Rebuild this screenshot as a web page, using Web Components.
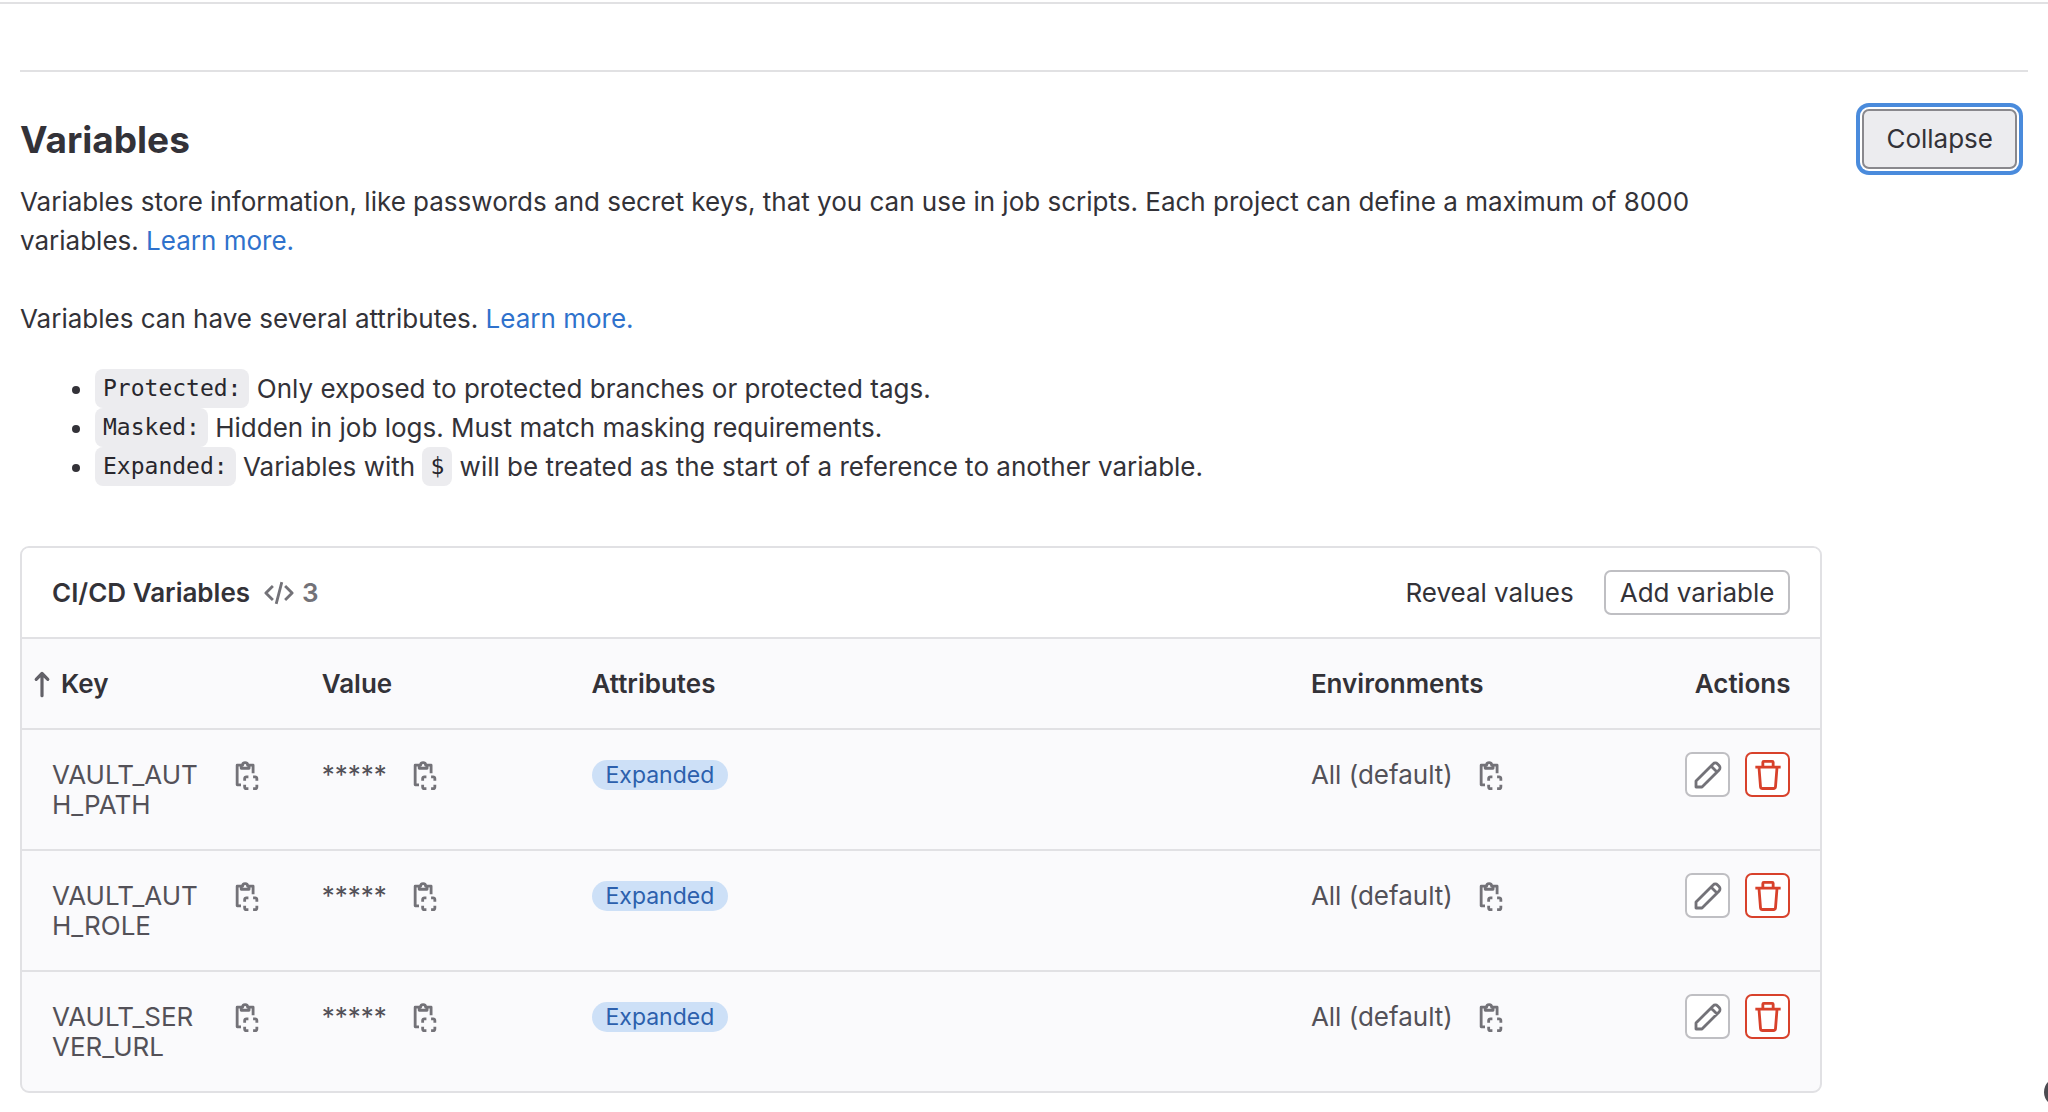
<!DOCTYPE html>
<html lang="en">
<head>
<meta charset="utf-8">
<title>CI/CD Settings</title>
<style>
    body {
        margin: 0;
        background: #fff;
        color: #333238;
        font-family: Inter, "Liberation Sans", sans-serif;
        font-size: 26px;
        line-height: 39px;
    }
</style>
</head>
<body>
<settings-page>
    <settings-section heading="Variables">
        <variables-intro></variables-intro>
        <variables-card heading="CI/CD Variables"></variables-card>
    </settings-section>
</settings-page>
<help-bubble></help-bubble>

<script>
const ICONS = {
    code: '<path d="M4.750 4.250 1 8l3.750 3.750M11.250 4.250 15 8l-3.750 3.750M9.500 2.250 6.500 13.750"/>',
    arrow: '<path d="M8 14.250V2.500M4.900 5.500 8 2.400 11.100 5.500" stroke-width="1.700" stroke-linecap="round"/>',
    copy: '<path d="M5.250 2.750H2.750V13.250H4.800M8.750 2.750h2.500V7M4.900 2.750V4.400h4.200V2.750H8.350a1.350 1.350 0 1 0-2.700 0z"/><path d="M6.750 11.100V9.900a.9.900 0 0 1 .9-.9h1.100M11.250 9h1.100a.9.900 0 0 1 .9.900v1.200M13.250 13.150v1.200a.9.900 0 0 1-.9.900h-1.100M8.750 15.250h-1.100a.9.900 0 0 1-.9-.9v-1.200"/>',
    pencil: '<path d="M1.600 14.400V11.200L10.700 2.100a1.700 1.700 0 0 1 2.400 0l.8.800a1.700 1.700 0 0 1 0 2.400L4.800 14.400zM9.600 3.200l3.200 3.200"/>',
    trash: '<path d="M1.250 3.750h13.500M5.250 3.500V1.250a.5.500 0 0 1 .5-.5h4.500a.5.500 0 0 1 .5.500V3.500M3.200 4l.8 10.200a1.100 1.100 0 0 0 1.100 1h5.800a1.100 1.100 0 0 0 1.100-1L12.800 4"/>'
};

class GlIcon extends HTMLElement {
    constructor() {
        super();
        this.attachShadow({mode: 'open'});
    }

    connectedCallback() {
        this.shadowRoot.innerHTML = `
            <style>
                :host {
                    display: inline-flex;
                    flex: none;
                }

                svg {
                    width: 30px;
                    height: 30px;
                    fill: none;
                    stroke: currentColor;
                    stroke-width: 1.5;
                    stroke-linejoin: round;
                }
            </style>
            <svg viewBox="0 0 16 16" aria-hidden="true">${ICONS[this.getAttribute('name')]}</svg>
        `;
    }
}
customElements.define('gl-icon', GlIcon);

class GlButton extends HTMLElement {
    constructor() {
        super();
        this.attachShadow({mode: 'open'});
    }

    connectedCallback() {
        const label = this.getAttribute('label');
        const aria = label ? `aria-label="${label}"` : '';

        this.shadowRoot.innerHTML = `
            <style>
                :host {
                    display: inline-flex;
                    flex: none;
                    color: #333238;
                }

                button {
                    display: inline-flex;
                    align-items: center;
                    justify-content: center;
                    box-sizing: border-box;
                    height: 45px;
                    margin: 0;
                    padding: 0 14px;
                    border: 2px solid #bfbfc3;
                    border-radius: 7px;
                    background: #fff;
                    color: inherit;
                    font: inherit;
                    line-height: 30px;
                    white-space: nowrap;
                    cursor: pointer;
                }

                :host([kind="plain"]) button {
                    border-color: transparent;
                    background: none;
                }

                :host([kind="active"]) button {
                    height: 60px;
                    padding: 0 22px;
                    border-color: #89888d;
                    background: #ececef;
                    box-shadow: 0 0 0 2px #fff, 0 0 0 6px #4a8bdc;
                    outline: none;
                }

                :host([kind="icon"]) button, :host([kind="danger"]) button {
                    width: 45px;
                    padding: 0;
                }

                :host([kind="icon"]) {
                    color: #737278;
                }

                :host([kind="danger"]) {
                    color: #d8412b;
                }

                :host([kind="danger"]) button {
                    border-color: currentColor;
                }

                :host([kind="copy"]) {
                    color: #737278;
                }

                :host([kind="copy"]) button {
                    height: 30px;
                    padding: 0;
                    border: 0;
                    background: none;
                }
            </style>
            <button type="button" ${aria}><slot></slot></button>
        `;
    }
}
customElements.define('gl-button', GlButton);

class GlBadge extends HTMLElement {
    constructor() {
        super();
        this.attachShadow({mode: 'open'});
        this.shadowRoot.innerHTML = `
            <style>
                :host {
                    display: inline-block;
                    padding: 0 14px;
                    border-radius: 15px;
                    background: #cde0f7;
                    color: #2c60ad;
                    font-size: 23px;
                    line-height: 30px;
                }
            </style>
            <slot></slot>
        `;
    }
}
customElements.define('gl-badge', GlBadge);

class SettingsPage extends HTMLElement {
    constructor() {
        super();
        this.attachShadow({mode: 'open'});
        this.shadowRoot.innerHTML = `
            <style>
                :host {
                    display: block;
                }

                header {
                    height: 2px;
                    border-bottom: 2px solid #e1e1e3;
                }

                main {
                    padding: 66px 20px 0;
                }
            </style>
            <header></header>
            <main><slot></slot></main>
        `;
    }
}
customElements.define('settings-page', SettingsPage);

class SettingsSection extends HTMLElement {
    constructor() {
        super();
        this.attachShadow({mode: 'open'});
    }

    connectedCallback() {
        this.shadowRoot.innerHTML = `
            <style>
                :host {
                    display: block;
                    border-top: 2px solid #e1e1e3;
                }

                section {
                    display: flex;
                    align-items: flex-start;
                    gap: 40px;
                    padding: 37px 11px 0 0;
                }

                .content {
                    flex: 1;
                    min-width: 0;
                }

                h2 {
                    margin: 0;
                    padding: 8px 0 19px;
                    font-size: 37px;
                    line-height: 46px;
                    font-weight: 700;
                }
            </style>
            <section>
                <div class="content">
                    <h2>${this.getAttribute('heading')}</h2>
                    <slot></slot>
                </div>
                <gl-button kind="active">Collapse</gl-button>
            </section>
        `;
    }
}
customElements.define('settings-section', SettingsSection);

class VariablesIntro extends HTMLElement {
    constructor() {
        super();
        this.attachShadow({mode: 'open'});
        this.shadowRoot.innerHTML = `
            <style>
                :host {
                    display: block;
                }

                p {
                    margin: 0 100px 39px 0;
                }

                ul {
                    margin: -8px 0 60px;
                    padding-left: 75px;
                }

                a {
                    color: #2f72cc;
                    text-decoration: none;
                }

                code {
                    display: inline-block;
                    padding: 0 8px;
                    border-radius: 8px;
                    background: #ececef;
                    color: #28272d;
                    font-family: "DejaVu Sans Mono", monospace;
                    font-size: 23px;
                    line-height: 39px;
                    vertical-align: top;
                }
            </style>
            <p>Variables store information, like passwords and secret keys, that you can use in job scripts. Each project can define a maximum of 8000 variables. <a href="#variables">Learn more.</a></p>
            <p>Variables can have several attributes. <a href="#attributes">Learn more.</a></p>
            <ul>
                <li><code>Protected:</code> Only exposed to protected branches or protected tags.</li>
                <li><code>Masked:</code> Hidden in job logs. Must match masking requirements.</li>
                <li><code>Expanded:</code> Variables with <code>$</code> will be treated as the start of a reference to another variable.</li>
            </ul>
        `;
    }
}
customElements.define('variables-intro', VariablesIntro);

class VariablesCard extends HTMLElement {
    constructor() {
        super();
        this.attachShadow({mode: 'open'});
        this.variables = ['VAULT_AUTH_PATH', 'VAULT_AUTH_ROLE', 'VAULT_SERVER_URL'];
    }

    row(key) {
        return `
            <tr>
                <td><div class="cell"><span class="key">${key}</span>
                    <gl-button kind="copy" label="Copy key"><gl-icon name="copy"></gl-icon></gl-button></div></td>
                <td><div class="cell"><span>*****</span>
                    <gl-button kind="copy" label="Copy value"><gl-icon name="copy"></gl-icon></gl-button></div></td>
                <td><div class="cell"><gl-badge>Expanded</gl-badge></div></td>
                <td><div class="cell"><span>All (default)</span>
                    <gl-button kind="copy" label="Copy environment"><gl-icon name="copy"></gl-icon></gl-button></div></td>
                <td><div class="actions">
                    <gl-button kind="icon" label="Edit"><gl-icon name="pencil"></gl-icon></gl-button>
                    <gl-button kind="danger" label="Delete"><gl-icon name="trash"></gl-icon></gl-button></div></td>
            </tr>
        `;
    }

    connectedCallback() {
        this.shadowRoot.innerHTML = `
            <style>
                :host {
                    display: block;
                    border: 2px solid #e1e1e4;
                    border-radius: 9px;
                    overflow: hidden;
                    background: #fafafc;
                }

                header {
                    display: flex;
                    align-items: center;
                    gap: 14px;
                    padding: 22px 30px;
                    background: #fff;
                }

                h3 {
                    margin: 0;
                    font-size: 26px;
                    line-height: 45px;
                    font-weight: 600;
                }

                .count {
                    display: flex;
                    flex: 1;
                    align-items: center;
                    gap: 8px;
                    color: #737278;
                    font-weight: 600;
                }

                table {
                    width: 100%;
                    table-layout: fixed;
                    border-collapse: separate;
                    border-spacing: 0;
                }

                th, td {
                    border-top: 2px solid #e1e1e4;
                    text-align: left;
                    vertical-align: top;
                    line-height: 30px;
                }

                th {
                    padding: 30px 30px 29px;
                    font-weight: 600;
                }

                th:last-child {
                    text-align: right;
                }

                .sort {
                    display: flex;
                    align-items: center;
                    gap: 4px;
                    margin-left: -25px;
                }

                .sort gl-icon {
                    color: #626168;
                }

                td {
                    padding: 30px 30px 29px;
                    color: #535158;
                }

                td:last-child {
                    padding-top: 22px;
                    padding-bottom: 0;
                }

                .cell {
                    display: flex;
                    align-items: flex-start;
                    gap: 23px;
                }

                .key {
                    width: 157px;
                    word-break: break-all;
                }

                .actions {
                    display: flex;
                    justify-content: flex-end;
                    gap: 15px;
                }
            </style>
            <header>
                <h3>${this.getAttribute('heading')}</h3>
                <span class="count"><gl-icon name="code"></gl-icon>${this.variables.length}</span>
                <gl-button kind="plain">Reveal values</gl-button>
                <gl-button>Add variable</gl-button>
            </header>
            <table>
                <colgroup>
                    <col style="width: 15%">
                    <col style="width: 15%">
                    <col style="width: 40%">
                    <col style="width: 15%">
                    <col style="width: 15%">
                </colgroup>
                <thead>
                    <tr>
                        <th scope="col" aria-sort="ascending"><span class="sort"><gl-icon name="arrow"></gl-icon>Key</span></th>
                        <th scope="col">Value</th>
                        <th scope="col">Attributes</th>
                        <th scope="col">Environments</th>
                        <th scope="col">Actions</th>
                    </tr>
                </thead>
                <tbody>${this.variables.map(key => this.row(key)).join('')}</tbody>
            </table>
        `;
    }
}
customElements.define('variables-card', VariablesCard);

// round launcher that peeks in from the right edge of the window
class HelpBubble extends HTMLElement {
    constructor() {
        super();
        this.attachShadow({mode: 'open'});
        this.shadowRoot.innerHTML = `
            <style>
                :host {
                    position: fixed;
                    right: -26px;
                    bottom: 5px;
                }

                button {
                    display: block;
                    width: 30px;
                    height: 30px;
                    padding: 0;
                    border: 0;
                    border-radius: 50%;
                    background: #4c4b51;
                }
            </style>
            <button type="button" aria-label="Help"></button>
        `;
    }
}
customElements.define('help-bubble', HelpBubble);
</script>
</body>
</html>
